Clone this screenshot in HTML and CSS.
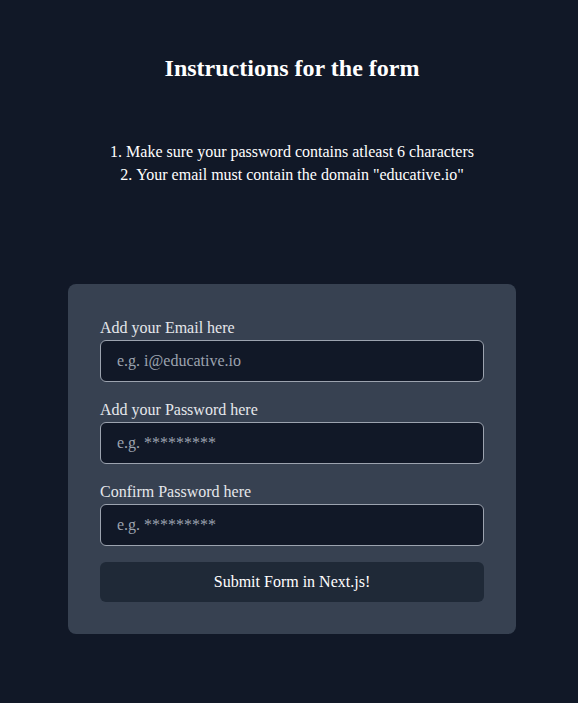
FILE: index.html
```html
<!DOCTYPE html>
<html lang="en">
<head>
<meta charset="utf-8">
<title>Form</title>
<link rel="stylesheet" href="styles.css">
</head>
<body>
<main class="page">
  <section class="intro">
    <h1 class="title">Instructions for the form</h1>
    <ol class="rules">
      <li>Make sure your password contains atleast 6 characters</li>
      <li>Your email must contain the domain "educative.io"</li>
    </ol>
  </section>
  <form class="card">
    <label class="label" for="email">Add your Email here</label>
    <input class="field" id="email" type="text" placeholder="e.g. i@educative.io">
    <label class="label" for="pw">Add your Password here</label>
    <input class="field" id="pw" type="text" placeholder="e.g. *********">
    <label class="label" for="pw2">Confirm Password here</label>
    <input class="field" id="pw2" type="text" placeholder="e.g. *********">
    <button class="submit" type="button">Submit Form in Next.js!</button>
  </form>
</main>
</body>
</html>
```
FILE: styles.css
```css
* { box-sizing: border-box; }
html, body {
  margin: 0;
  padding: 0;
  background: #111827;
  color: #ffffff;
  font-family: "Liberation Serif", "Times New Roman", serif;
  font-size: 16px;
  line-height: 24px;
}
.page {
  display: flex;
  flex-direction: column;
  align-items: center;
  padding: 52px 0 0 6px;
}
.intro {
  display: flex;
  flex-direction: column;
  align-items: center;
  text-align: center;
}
.title {
  margin: 0;
  font-size: 24px;
  line-height: 32px;
  font-weight: bold;
}
.rules {
  margin: 56px 0 0 0;
  padding: 0;
  list-style: decimal inside;
  line-height: 23px;
}
.card {
  margin-top: 98px;
  width: 448px;
  background: #374151;
  border-radius: 8px;
  padding: 32px;
  display: flex;
  flex-direction: column;
}
.label {
  color: #e5e7eb;
  line-height: 24px;
}
.field {
  height: 42px;
  margin-bottom: 16px;
  padding: 8px 16px;
  background: #111827;
  border: 1px solid #9ca3af;
  border-radius: 6px;
  color: #ffffff;
  font-family: inherit;
  font-size: 16px;
  outline: none;
}
.field::placeholder { color: #9ca3af; }
.submit {
  height: 40px;
  background: #1f2937;
  border: none;
  border-radius: 6px;
  color: #ffffff;
  font-family: inherit;
  font-size: 16px;
}
```
